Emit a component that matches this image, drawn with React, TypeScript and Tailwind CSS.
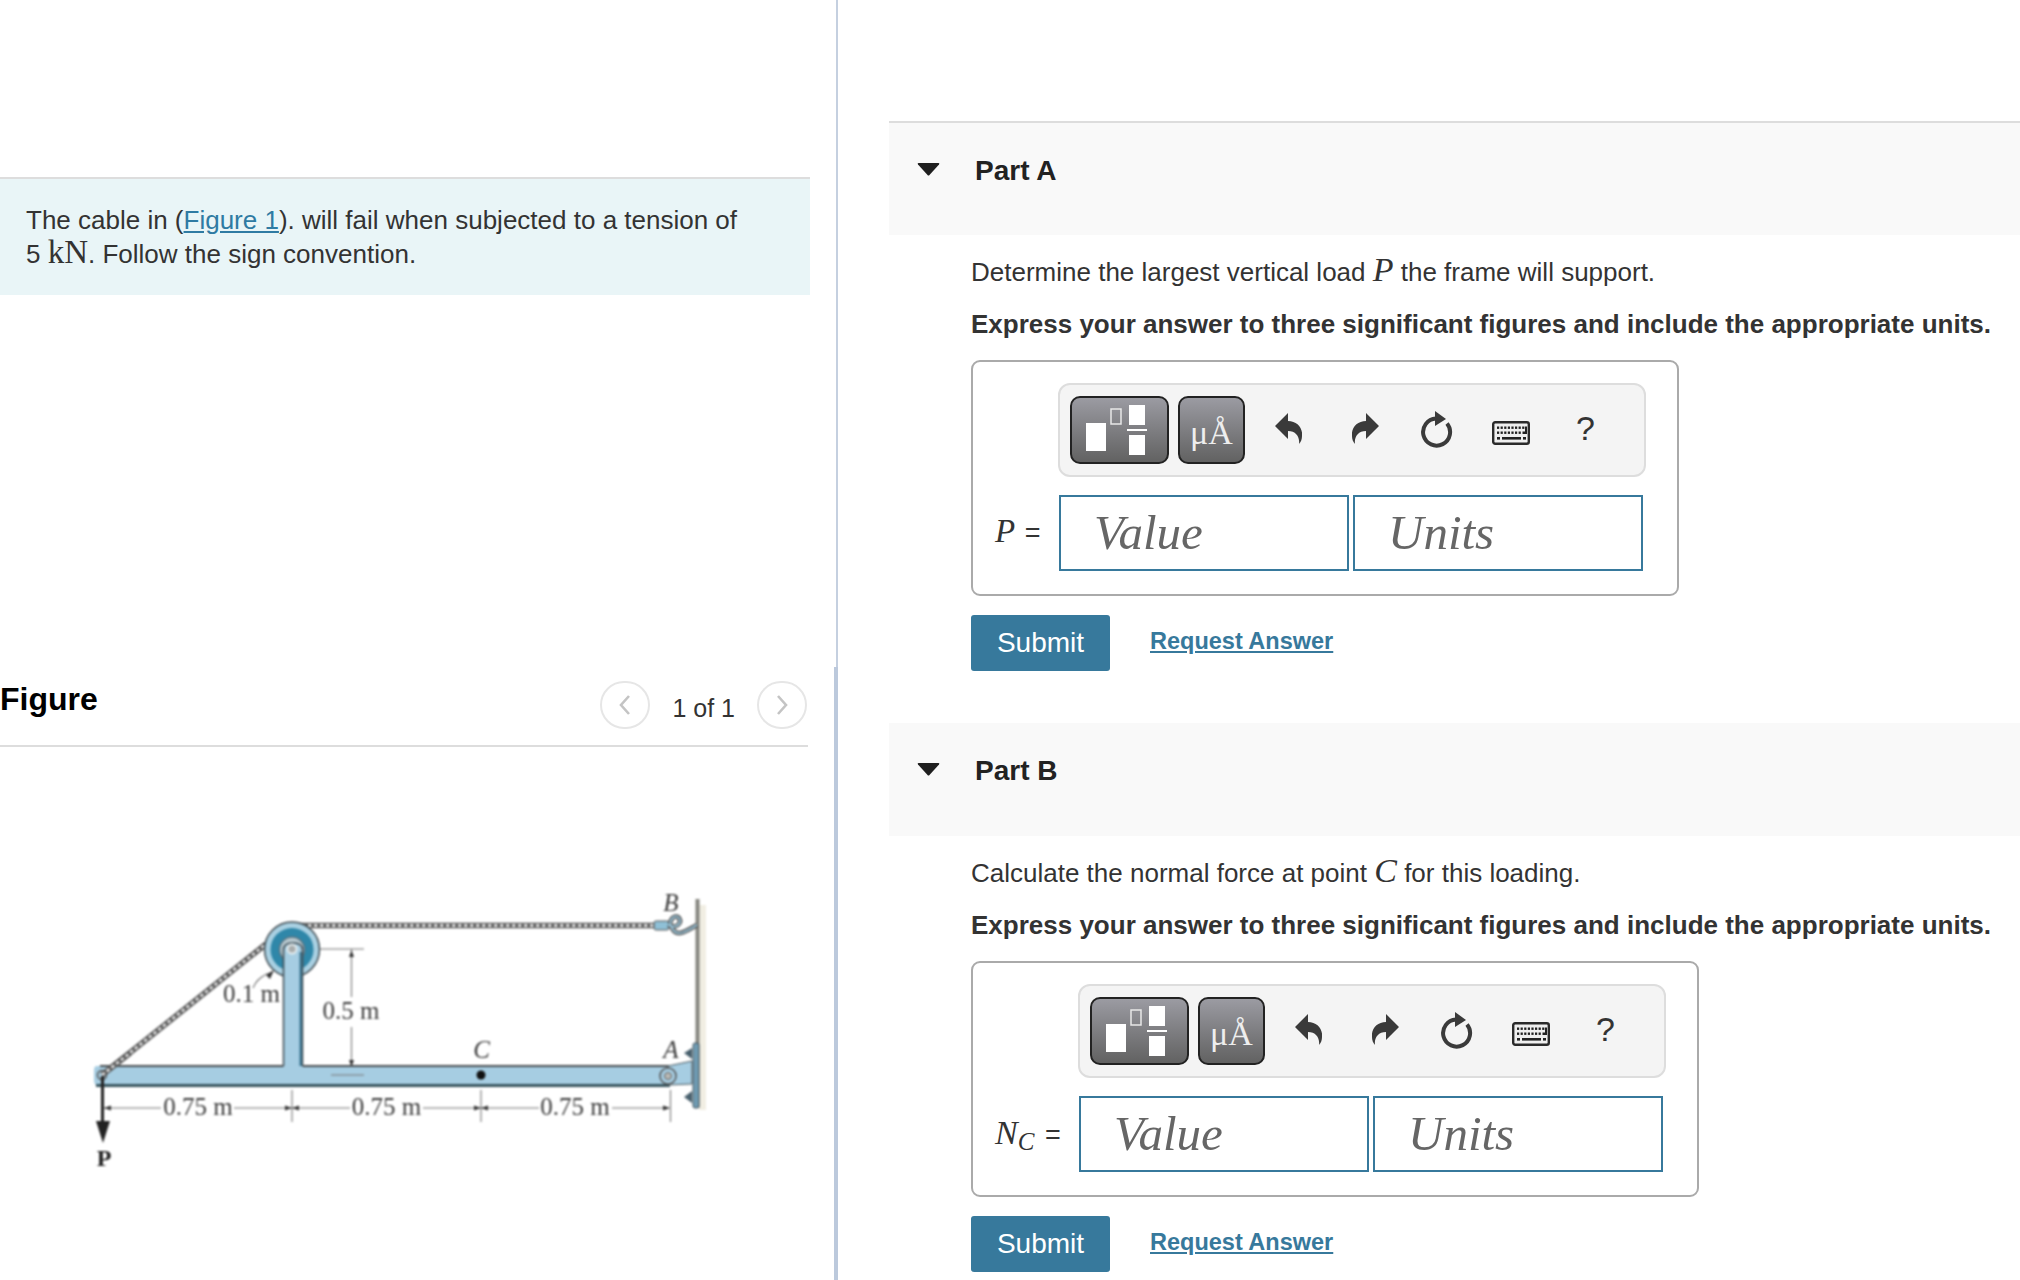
import React from "react";

const sans = "font-['Liberation_Sans',Arial,sans-serif]";
const serif = "font-['Liberation_Serif','Times_New_Roman',serif]";

function Rope({ d }: { d: string }) {
  return (
    <>
      <path d={d} stroke="#555" strokeWidth="5.5" fill="none" />
      <path d={d} stroke="#dcdcdc" strokeWidth="2.8" strokeDasharray="3.5 2.5" fill="none" />
    </>
  );
}

function Diagram() {
  const dims = [
    { x: 198, t: "0.75 m" },
    { x: 386.5, t: "0.75 m" },
    { x: 575, t: "0.75 m" },
  ];
  const hook = "M668 925 C677 929 682 923 679 918 C675 913 667 921 672 928 C677 938 686 931 697 925";
  return (
    <svg viewBox="0 890 730 290" className="block w-[730px] h-[290px] blur-[0.8px]" style={{ fontFamily: "'Liberation Serif', serif" }}>
      {/* wall */}
      <rect x="699" y="905" width="7" height="205" fill="#f1eee3" />
      <rect x="695.5" y="899" width="4" height="209" fill="#85857f" />
      {/* ropes */}
      <Rope d="M102 1075 L266 944" />
      <Rope d="M290 925.5 L654 925.5" />
      {/* hook B */}
      <rect x="654" y="921" width="15" height="9" rx="2" fill="#8fc0d6" stroke="#555" strokeWidth="1" />
      <path d={hook} fill="none" stroke="#444" strokeWidth="4.5" />
      <path d={hook} fill="none" stroke="#9cc6da" strokeWidth="2" />
      {/* pulley */}
      <circle cx="292" cy="949.5" r="27.5" fill="#a9d0e2" stroke="#3f4a50" strokeWidth="1.5" />
      <circle cx="292" cy="949.5" r="21.5" fill="#2f87a9" />
      <circle cx="292" cy="949.5" r="12.5" fill="#b5c6cd" stroke="#5b7583" strokeWidth="1.5" />
      {/* beam */}
      <path d="M97 1066 H670 V1085 H97 Q94 1085 94 1080 V1070 Q94 1066 97 1066 Z" fill="#a6cde2" />
      <path d="M283.5 1070 V950 Q283.5 943 293 943 Q302.5 943 302.5 950 V1070 Z" fill="#a6cde2" />
      <rect x="299.5" y="952" width="3" height="114" fill="#3a7894" />
      <path d="M283.5 1066 V950 Q283.5 943 293 943 Q302.5 943 302.5 950 V1066" fill="none" stroke="#45535a" strokeWidth="1.6" />
      <path d="M100 1066 H283.5 M302.5 1066 H670" stroke="#4a4f52" strokeWidth="2" fill="none" />
      <path d="M96 1085.5 H670" stroke="#38555f" strokeWidth="2.8" fill="none" />
      <circle cx="292" cy="949" r="4.5" fill="#a9adad" stroke="#e3ecef" strokeWidth="2" />
      <circle cx="102" cy="1075" r="4.5" fill="#a6cde2" stroke="#555" strokeWidth="1.5" />
      <Rope d="M102 1075 L130 1053" />
      {/* bracket A */}
      <path d="M668 1066 L692 1061 V1084 L668 1085 Z" fill="#a6cde2" stroke="#4a5a62" strokeWidth="1" />
      <circle cx="668" cy="1076" r="8" fill="#a6cde2" stroke="#555" strokeWidth="1.5" />
      <circle cx="668" cy="1076" r="3.5" fill="#b9b9b5" stroke="#666" strokeWidth="1" />
      <rect x="693" y="1043" width="6" height="65" rx="2" fill="#6f9bb3" stroke="#44545d" strokeWidth="1" />
      <path d="M684 1053 L692 1048 V1059 Z M684 1097 L692 1091 V1103 Z" fill="#48606d" />
      {/* load P */}
      <path d="M102.5 1076 V1122" stroke="#222" strokeWidth="3" />
      <path d="M96 1121 H110 L103 1143 Z" fill="#222" />
      <text x="104" y="1166" fontSize="24" fontWeight="700" textAnchor="middle" fill="#222">P</text>
      {/* dimensions */}
      <g stroke="#777" strokeWidth="1.1" fill="none">
        <path d="M104 1108 H161 M234 1108 H350 M423 1108 H539 M612 1108 H669" />
        <path d="M292 1090 V1122 M481 1090 V1122 M670.5 1090 V1122" />
        <path d="M351.5 949 V997 M351.5 1027 V1067" />
        <path d="M320 949 H364 M331 1075 H364" />
        <path d="M273 972 C264 974 256 980 253 988" />
      </g>
      <g fill="#333">
        <path d="M104 1108 L111 1105.5 V1110.5 Z M292 1108 L285 1105.5 V1110.5 Z M292 1108 L299 1105.5 V1110.5 Z M481 1108 L474 1105.5 V1110.5 Z M481 1108 L488 1105.5 V1110.5 Z M670 1108 L663 1105.5 V1110.5 Z" />
        <path d="M351.5 950 L349 957 H354 Z M351.5 1067 L349 1060 H354 Z M274 970 L266 975 L270 979 Z" />
      </g>
      {dims.map((d, i) => (
        <text key={i} x={d.x} y="1115" fontSize="25" textAnchor="middle" fill="#3a3a3a">{d.t}</text>
      ))}
      <text x="351" y="1019" fontSize="25" textAnchor="middle" fill="#3a3a3a">0.5 m</text>
      <text x="251.5" y="1002" fontSize="25" textAnchor="middle" fill="#3a3a3a">0.1 m</text>
      <text x="481.5" y="1058" fontSize="25" fontStyle="italic" textAnchor="middle" fill="#3a3a3a">C</text>
      <circle cx="481" cy="1075" r="4.5" fill="#111" />
      <text x="671" y="1058" fontSize="25" fontStyle="italic" textAnchor="middle" fill="#3a3a3a">A</text>
      <text x="671" y="911" fontSize="25" fontStyle="italic" textAnchor="middle" fill="#3a3a3a">B</text>
    </svg>
  );
}

function Templates() {
  return (
    <button className="w-[99px] h-[68px] rounded-[10px] border-2 border-[#222] bg-gradient-to-b from-[#9b9ba2] to-[#626262] shrink-0 p-0">
      <svg viewBox="0 0 95 64" className="block w-[95px] h-[64px]">
        <rect x="14" y="25" width="20" height="28" fill="#fff" />
        <rect x="39" y="11" width="10" height="15" fill="none" stroke="#e8e8e8" strokeWidth="1.5" />
        <rect x="57" y="7" width="16" height="20" fill="#fff" />
        <rect x="55" y="31" width="20" height="2" fill="#fff" />
        <rect x="57" y="37" width="16" height="20" fill="#fff" />
      </svg>
    </button>
  );
}

function Symbols() {
  return (
    <button className={`w-[67px] h-[68px] rounded-[10px] border-2 border-[#222] bg-gradient-to-b from-[#9b9ba2] to-[#626262] shrink-0 p-0 text-[#eeeeee] text-[34px] leading-none ${serif}`}>
      <span className="block mt-[6px]">μÅ</span>
    </button>
  );
}

function Undo({ flip = false, cls }: { flip?: boolean; cls: string }) {
  return (
    <svg viewBox="0 0 27 31" className={`w-[27px] h-[31px] shrink-0 -mt-[3px] ${cls}`}>
      <path
        transform={flip ? "translate(27 0) scale(-1 1)" : undefined}
        d="M0 13 L13 0 V8 C22 8 28 15 27 23 C27 26 26 29 24 31 C25 24 21 18 13 18 V26 Z"
        fill="#3a3a3a"
      />
    </svg>
  );
}

function Reload() {
  return (
    <svg viewBox="0 0 32 37" className="w-[32px] h-[37px] shrink-0 ml-[42.5px] -mt-[2px]">
      <path d="M26 12.5 A13.5 13.5 0 1 1 15 7.6" fill="none" stroke="#3a3a3a" strokeWidth="4" />
      <path d="M14 0 L25 8 L14 15 Z" fill="#3a3a3a" />
    </svg>
  );
}

function Keyboard() {
  const dots = [];
  for (let i = 0; i < 8; i++) dots.push(<rect key={"a" + i} x={5 + i * 3.6} y="5.5" width="2.2" height="2.4" fill="#222" />);
  for (let i = 0; i < 7; i++) dots.push(<rect key={"b" + i} x={5 + i * 3.6} y="10.5" width="2.2" height="2.4" fill="#222" />);
  return (
    <svg viewBox="0 0 38 24" className="w-[38px] h-[24px] shrink-0 ml-[39px] mt-[6px]">
      <rect x="1.2" y="1.2" width="35.6" height="21.6" rx="2" fill="#efefef" stroke="#2a2a2a" strokeWidth="2.4" />
      {dots}
      <rect x="5" y="16" width="3" height="2.6" fill="#222" />
      <rect x="10" y="16" width="19" height="2.6" fill="#222" />
      <rect x="31" y="16" width="3" height="2.6" fill="#222" />
      <path d="M33 5.5 H35 V13 H30.5 V10.5 H33 Z" fill="#222" />
    </svg>
  );
}

function Toolbar({ w, cls }: { w: string; cls: string }) {
  return (
    <div className={`h-[94px] rounded-[12px] border-2 border-[#dddddd] bg-[#f4f4f4] flex items-center pl-[10px] ${w} ${cls}`}>
      <Templates />
      <div className="ml-[9px]"><Symbols /></div>
      <Undo cls="ml-[29.5px]" />
      <Undo flip cls="ml-[50px]" />
      <Reload />
      <Keyboard />
      <span className={`ml-[46px] text-[34px] leading-none text-[#333] -mt-[4px] ${sans}`}>?</span>
    </div>
  );
}

function AnswerField({ text }: { text: string }) {
  return (
    <div className={`w-[290px] h-[76px] border-2 border-[#37799c] bg-white flex items-center pl-[33px] italic text-[49px] text-[#666666] ${serif}`}>
      {text}
    </div>
  );
}

function Part(props: {
  title: string;
  prompt: React.ReactNode;
  label: React.ReactNode;
  boxW: string;
  offset: string;
  labelW: string;
  topBorder?: boolean;
  bottom: string;
}) {
  return (
    <section className={props.bottom}>
      <div className={`bg-[#f9f9f9] flex items-start pl-[28px] ${props.topBorder ? "h-[114px] border-t-2 border-[#dddddd] pt-[34px]" : "h-[113px] pt-[34px]"}`}>
        <svg viewBox="0 0 23 13" className="w-[23px] h-[13px] mt-[6px]">
          <path d="M1.5 0 H21.5 Q23 0 22 1.5 L12.5 12 Q11.5 13 10.5 12 L1 1.5 Q0 0 1.5 0 Z" fill="#1f1f1f" />
        </svg>
        <h2 className="ml-[35px] text-[28px] leading-[28px] font-bold text-[#222]">{props.title}</h2>
      </div>
      <div className="pl-[82px]">
        <p className="mt-[19px] h-[32px] leading-[32px] text-[26px] text-[#333] whitespace-nowrap">{props.prompt}</p>
        <p className="mt-[22px] h-[32px] leading-[32px] text-[26px] font-bold text-[#333] whitespace-nowrap">
          Express your answer to three significant figures and include the appropriate units.
        </p>
        <div className={`mt-[20px] h-[236px] rounded-[9px] border-2 border-[#aaaaaa] pt-[21px] ${props.boxW}`}>
          <Toolbar w="w-[588px]" cls={props.offset} />
          <div className="flex items-center mt-[18px]">
            <div className={`${props.labelW} pl-[22px] -mt-[3px] text-[27px] text-[#333] whitespace-nowrap`}>{props.label}</div>
            <div className="flex gap-[4px]">
              <AnswerField text="Value" />
              <AnswerField text="Units" />
            </div>
          </div>
        </div>
        <div className="flex items-center mt-[19px]">
          <button className="w-[139px] h-[56px] rounded-[3px] bg-[#37799c] text-white text-[28px]">Submit</button>
          <a className="ml-[40px] text-[23.5px] font-bold text-[#37799c] underline -mt-[2px]" href="#">Request Answer</a>
        </div>
      </div>
    </section>
  );
}

function Chevron({ d }: { d: string }) {
  return (
    <div className="w-[50px] h-[48px] rounded-full border-2 border-[#e6e6e6] flex items-center justify-center">
      <svg viewBox="0 0 16 24" className="w-[16px] h-[24px]">
        <path d={d} fill="none" stroke="#c4c4c4" strokeWidth="2.6" />
      </svg>
    </div>
  );
}

export default function App() {
  return (
    <div className={`w-[2020px] h-[1280px] overflow-hidden bg-white flex ${sans}`}>
      <aside className="w-[810px] shrink-0 pt-[177px]">
        <div className="h-[118px] border-t-2 border-[#dddddd] bg-[#e9f5f7] pl-[26px] pt-[25px] text-[26px] leading-[32px] text-[#333]">
          The cable in (<a className="text-[#2f7ba3] underline" href="#">Figure 1</a>). will fail when subjected to a tension of
          <br />
          5 <span className={`text-[33px] ${serif}`}>kN</span>. Follow the sign convention.
        </div>
        <div className="mt-[386px] w-[808px] h-[66px] border-b-2 border-[#dddddd] flex items-start">
          <h2 className="text-[32px] font-bold text-black mt-[-4px] leading-[44px]">Figure</h2>
          <div className="ml-auto mr-[1px] flex items-start">
            <Chevron d="M12 3 L4 12 L12 21" />
            <span className="mx-[22px] mt-[11px] text-[25px] leading-[32px] text-[#333]">1 of 1</span>
            <Chevron d="M4 3 L12 12 L4 21" />
          </div>
        </div>
        <div className="mt-[143px]">
          <Diagram />
        </div>
      </aside>
      <div className="ml-[24px] w-[4px] shrink-0 flex flex-col items-end">
        <div className="h-[667px] w-[2px] bg-[#c5d0e0]" />
        <div className="flex-1 w-full bg-[#bcc9dc]" />
      </div>
      <main className="ml-[51px] flex-1 pt-[121px] min-w-0">
        <Part
          topBorder
          title="Part A"
          bottom="h-[602px]"
          prompt={<>Determine the largest vertical load <span className={`italic text-[34px] ${serif}`}>P</span> the frame will support.</>}
          label={<><span className={`italic text-[33px] ${serif}`}>P</span> <span className="ml-[2px]">=</span></>}
          boxW="w-[708px]"
          offset="ml-[85px]"
          labelW="w-[86px]"
        />
        <Part
          title="Part B"
          bottom=""
          prompt={<>Calculate the normal force at point <span className={`italic text-[34px] ${serif}`}>C</span> for this loading.</>}
          label={<><span className={`italic text-[34px] ${serif}`}>N<sub className="text-[25px]">C</sub></span> <span className="ml-[3px]">=</span></>}
          boxW="w-[728px]"
          offset="ml-[105px]"
          labelW="w-[106px]"
        />
      </main>
    </div>
  );
}
